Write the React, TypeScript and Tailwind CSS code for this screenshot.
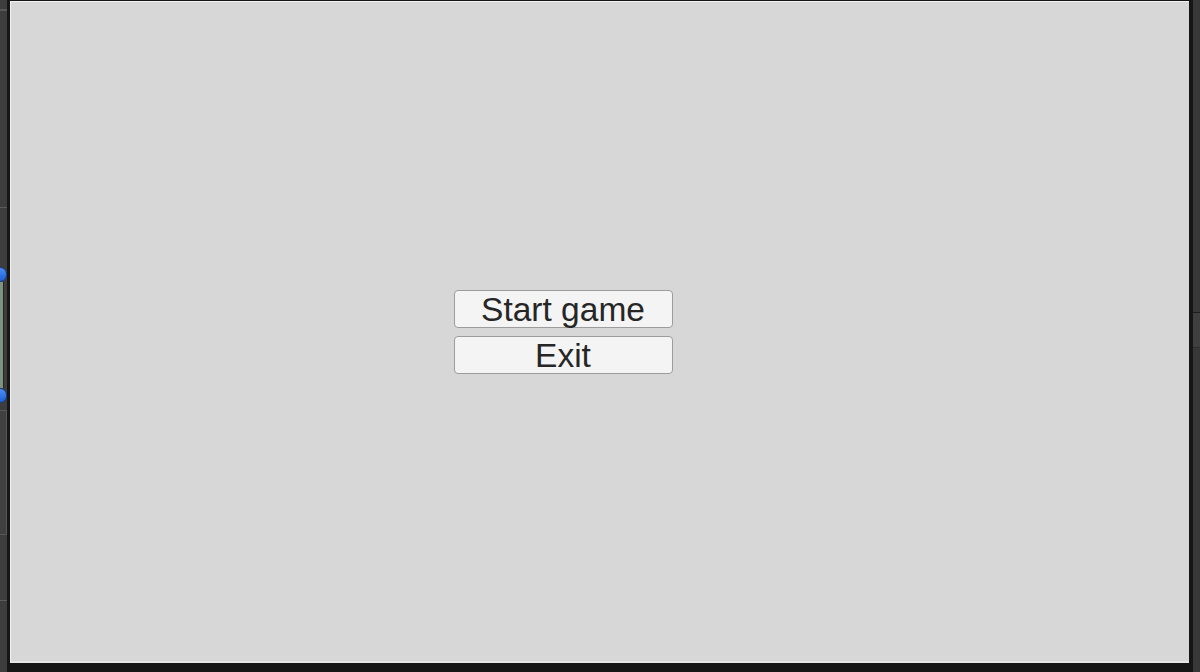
import React from 'react';

function Knob() {
  return (
    <div className="h-[15px] w-full overflow-hidden">
      <div className="-ml-[7px] h-[15px] w-[14px] rounded-full border border-[#1b3f8a] bg-gradient-to-b from-[#4d8ef5] to-[#1d5fd6]" />
    </div>
  );
}

function LeftStrip() {
  return (
    <div className="flex h-full w-[7px] flex-col overflow-hidden bg-[#3d3d3d]">
      <div className="h-[9px]" />
      <div className="h-[2px] bg-[#575757]" />
      <div className="h-[196px]" />
      <div className="h-px bg-[#5a5a5a]" />
      <div className="h-[59px]" />
      <Knob />
      <div className="flex h-[106px]">
        <div className="w-[3px] bg-[#7f917f]" />
        <div className="w-px bg-[#262626]" />
      </div>
      <Knob />
      <div className="h-[7px]" />
      <div className="h-[125px] border border-l-0 border-[#575757] bg-[#404040]" />
      <div className="h-[65px]" />
      <div className="h-px bg-[#5c5c5c]" />
      <div className="flex-1" />
    </div>
  );
}

function RightStrip() {
  return (
    <div className="flex h-full w-[7px] flex-col bg-[#383838]">
      <div className="h-[312px]" />
      <div className="h-px bg-[#1e1e1e]" />
      <div className="h-[34px] bg-[#3f3f3f]" />
      <div className="h-px bg-[#2e2e2e]" />
      <div className="flex-1" />
    </div>
  );
}

function MenuButton({ label }: { label: string }) {
  return (
    <button className="flex h-[38px] w-[219px] items-center justify-center rounded-[4px] border border-[#9c9c9c] bg-[#f4f4f4] pt-[2px] text-[33.5px] leading-none text-[#262626] font-['Liberation_Sans',Arial,sans-serif]">
      {label}
    </button>
  );
}

export default function App() {
  return (
    <div className="flex h-[672px] w-[1200px] overflow-hidden bg-[#1a1a1a]">
      <LeftStrip />
      <div className="flex h-full flex-1 flex-col bg-[#161616] pt-px pl-[3px] pr-[4px] pb-[9px]">
        <div className="flex flex-1 items-center justify-center border-t border-l border-b-2 border-t-[#f2f2f2] border-l-[#f2f2f2] border-b-[#e6e6e6] bg-[#d7d7d7]">
          <div className="mr-[74px] flex flex-col gap-[8px]">
            <MenuButton label="Start game" />
            <MenuButton label="Exit" />
          </div>
        </div>
      </div>
      <RightStrip />
    </div>
  );
}
